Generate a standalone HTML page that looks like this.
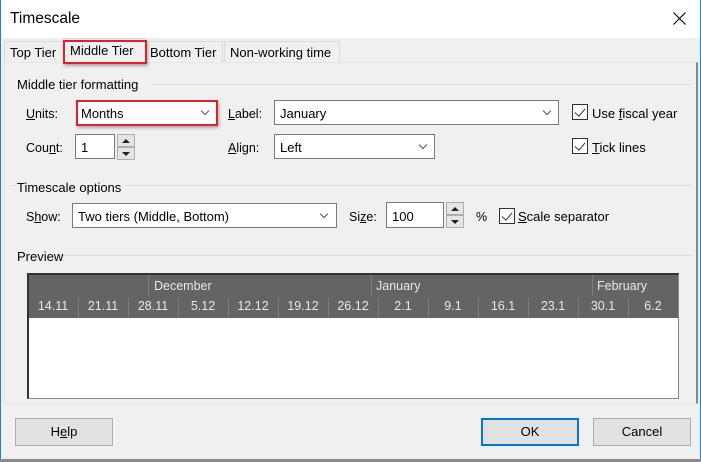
<!DOCTYPE html>
<html><head><meta charset="utf-8"><style>
*{margin:0;padding:0;box-sizing:border-box}
body{width:701px;height:462px;overflow:hidden;background:#f0f0f0;font-family:"Liberation Sans",sans-serif;font-size:12.5px;color:#000;position:relative}
.a{position:absolute;white-space:nowrap}
.box{position:absolute;background:#fff;border:1px solid #7a7a7a}
.chev{position:absolute;width:6px;height:6px;border-right:1px solid #555;border-bottom:1px solid #555;transform:rotate(45deg)}
.cb{position:absolute;width:16px;height:16px;border:1px solid #333;background:#fff}
.cb:after{content:"";position:absolute;left:4px;top:1px;width:5px;height:9px;border-right:1.5px solid #333;border-bottom:1.5px solid #333;transform:rotate(40deg)}
.sp{position:absolute;width:18px;border:1px solid #adadad;background:#e5e5e5}
.line{position:absolute;height:1px;background:#dcdcdc}
.btn{position:absolute;height:28px;border:1px solid #adadad;background:#e1e1e1;text-align:center;line-height:26px;font-size:13px}
.tab{position:absolute;top:41px;height:21px;border:1px solid #d9d9d9;border-bottom:none;background:#f0f0f0;font-size:13px;line-height:21px;padding-left:5px}
.hd{position:absolute;color:#e8e8e8;font-size:12.5px}
.vd{position:absolute;width:1px;background:#7e7e7e}
</style></head><body>
<div class="a" style="left:0;top:0;width:701px;height:38px;background:#fff"></div>
<div class="a" style="left:0;top:0;width:1px;height:462px;background:#1883d7"></div>
<div class="a" style="left:700px;top:0;width:1px;height:462px;background:#1883d7"></div>
<div class="a" style="left:0;top:459px;width:701px;height:3px;background:#8a8a8a"></div>
<div class="a" style="left:10px;top:10px;font-size:15.5px">Timescale</div>
<svg class="a" style="left:673px;top:12px" width="13" height="13"><path d="M0.5 0.5L12.5 12.5M12.5 0.5L0.5 12.5" stroke="#000" stroke-width="1.1"/></svg>

<div class="a" style="left:4px;top:62px;width:694px;height:342px;border:1px solid #e6e6e6;border-right:2px solid #888"></div>
<div class="tab" style="left:4px;width:60px">Top Tier</div>
<div class="tab" style="left:146px;width:77px;padding-left:3px">Bottom Tier</div>
<div class="tab" style="left:224px;width:116px">Non-working time</div>
<div class="tab" style="left:63px;top:38px;height:25px;width:83px;border-color:#d9d9d9;padding-left:6px;line-height:23px">Middle Tier</div>
<div class="a" style="left:63px;top:40px;width:84px;height:24px;border:2px solid #e0202a;box-shadow:1px 2px 3px rgba(0,0,0,.3)"></div>

<div class="a" style="left:17px;top:77px;font-size:13px">Middle tier formatting</div>
<div class="line" style="left:152px;top:84px;width:538px"></div>
<div class="a" style="left:26px;top:107px"><u>U</u>nits:</div>
<div class="box" style="left:76px;top:100px;width:141px;height:25px"></div>
<div class="a" style="left:81px;top:106px;font-size:13px">Months</div>
<div class="chev" style="left:202px;top:108px"></div>
<div class="a" style="left:76px;top:100px;width:142px;height:26px;border:2px solid #e0202a;box-shadow:1px 2px 3px rgba(0,0,0,.3)"></div>
<div class="a" style="left:228px;top:107px"><u>L</u>abel:</div>
<div class="box" style="left:274px;top:100px;width:285px;height:25px"></div>
<div class="a" style="left:280px;top:106px;font-size:13px">January</div>
<div class="chev" style="left:544px;top:108px"></div>
<div class="cb" style="left:572px;top:104px"></div>
<div class="a" style="left:592px;top:106px;font-size:13px">Use <u>f</u>iscal year</div>

<div class="a" style="left:26px;top:141px">Cou<u>n</u>t:</div>
<div class="box" style="left:75px;top:134px;width:40px;height:25px"></div>
<div class="a" style="left:81px;top:140px;font-size:13px">1</div>
<div class="sp" style="left:117px;top:134px;height:13px"></div><div class="sp" style="left:117px;top:147px;height:13px"></div>
<svg class="a" style="left:121px;top:137px" width="10" height="20"><path d="M1 6L5 2L9 6Z M1 15L5 19L9 15Z" fill="#222"/></svg>
<div class="a" style="left:228px;top:141px"><u>A</u>lign:</div>
<div class="box" style="left:274px;top:134px;width:161px;height:25px"></div>
<div class="a" style="left:280px;top:140px;font-size:13px">Left</div>
<div class="chev" style="left:420px;top:142px"></div>
<div class="cb" style="left:572px;top:138px"></div>
<div class="a" style="left:592px;top:140px;font-size:13px"><u>T</u>ick lines</div>

<div class="line" style="left:10px;top:185px;width:682px"></div>
<div class="a" style="left:17px;top:180px;font-size:13px;background:#f0f0f0;padding-right:4px">Timescale options</div>
<div class="a" style="left:26px;top:210px">S<u>h</u>ow:</div>
<div class="box" style="left:72px;top:203px;width:265px;height:25px"></div>
<div class="a" style="left:78px;top:209px;font-size:13px">Two tiers (Middle, Bottom)</div>
<div class="chev" style="left:321px;top:211px"></div>
<div class="a" style="left:349px;top:210px">Si<u>z</u>e:</div>
<div class="box" style="left:386px;top:202px;width:58px;height:26px"></div>
<div class="a" style="left:392px;top:209px;font-size:13px">100</div>
<div class="sp" style="left:446px;top:202px;height:13px"></div><div class="sp" style="left:446px;top:215px;height:13px"></div>
<svg class="a" style="left:450px;top:205px" width="10" height="20"><path d="M1 6L5 2L9 6Z M1 15L5 19L9 15Z" fill="#222"/></svg>
<div class="a" style="left:476px;top:210px">%</div>
<div class="cb" style="left:499px;top:208px"></div>
<div class="a" style="left:518px;top:209px;font-size:13px"><u>S</u>cale separator</div>

<div class="line" style="left:60px;top:255px;width:632px"></div>
<div class="a" style="left:17px;top:249px;font-size:13px">Preview</div>

<div class="a" style="left:27px;top:273px;width:652px;height:126px;background:#fff;border:1px solid #8a8a8a;border-top:2px solid #333;border-left:2px solid #333"></div>
<div class="a" style="left:29px;top:275px;width:649px;height:43px;background:#646464"></div>
<div class="vd" style="left:148px;top:275px;height:21px"></div>
<div class="vd" style="left:371px;top:275px;height:21px"></div>
<div class="vd" style="left:592px;top:275px;height:21px"></div>
<div class="hd" style="left:154px;top:279px">December</div>
<div class="hd" style="left:376px;top:279px">January</div>
<div class="hd" style="left:597px;top:279px">February</div>
<div class="vd" style="left:78px;top:298px;height:20px"></div><div class="vd" style="left:128px;top:298px;height:20px"></div><div class="vd" style="left:178px;top:298px;height:20px"></div><div class="vd" style="left:228px;top:298px;height:20px"></div><div class="vd" style="left:278px;top:298px;height:20px"></div><div class="vd" style="left:328px;top:298px;height:20px"></div><div class="vd" style="left:378px;top:298px;height:20px"></div><div class="vd" style="left:428px;top:298px;height:20px"></div><div class="vd" style="left:478px;top:298px;height:20px"></div><div class="vd" style="left:528px;top:298px;height:20px"></div><div class="vd" style="left:578px;top:298px;height:20px"></div><div class="vd" style="left:628px;top:298px;height:20px"></div>
<div class="hd" style="left:28px;top:299px;width:50px;text-align:center">14.11</div>
<div class="hd" style="left:78px;top:299px;width:50px;text-align:center">21.11</div>
<div class="hd" style="left:128px;top:299px;width:50px;text-align:center">28.11</div>
<div class="hd" style="left:178px;top:299px;width:50px;text-align:center">5.12</div>
<div class="hd" style="left:228px;top:299px;width:50px;text-align:center">12.12</div>
<div class="hd" style="left:278px;top:299px;width:50px;text-align:center">19.12</div>
<div class="hd" style="left:328px;top:299px;width:50px;text-align:center">26.12</div>
<div class="hd" style="left:378px;top:299px;width:50px;text-align:center">2.1</div>
<div class="hd" style="left:428px;top:299px;width:50px;text-align:center">9.1</div>
<div class="hd" style="left:478px;top:299px;width:50px;text-align:center">16.1</div>
<div class="hd" style="left:528px;top:299px;width:50px;text-align:center">23.1</div>
<div class="hd" style="left:578px;top:299px;width:50px;text-align:center">30.1</div>
<div class="hd" style="left:628px;top:299px;width:50px;text-align:center">6.2</div>

<div class="btn" style="left:15px;top:418px;width:98px">H<u>e</u>lp</div>
<div class="btn" style="left:481px;top:418px;width:98px;border:2px solid #0078d7;line-height:24px">OK</div>
<div class="btn" style="left:593px;top:418px;width:98px">Cancel</div>
</body></html>
